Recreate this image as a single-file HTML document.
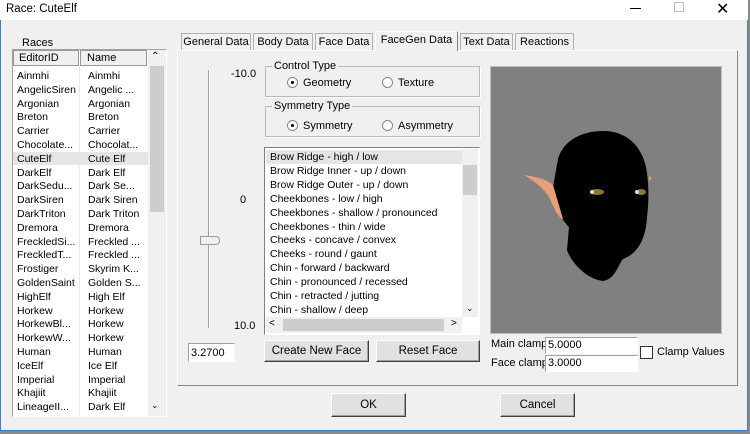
<!DOCTYPE html><html><head><style>
*{box-sizing:border-box;margin:0;padding:0}
body{width:750px;height:434px;background:#8a8a8a;font-family:"Liberation Sans",sans-serif;font-size:11px;color:#000;position:relative;overflow:hidden}
.a{position:absolute}
.win{left:0;top:0;width:748px;height:431px;background:#f0f0f0;border:1px solid #3c7fd0;border-top:none}
.sunk{border:1px solid;border-color:#a0a0a0 #fff #fff #a0a0a0;background:#fff}
.btn{background:#e1e1e1;border:1px solid;border-color:#fff #404040 #404040 #fff;box-shadow:inset -1px -1px 0 #a0a0a0;text-align:center;font-size:11.5px}
.grp{border:1px solid #b9b9b9;box-shadow:1px 1px 0 #fff}
.row{position:absolute;left:0;height:14px;line-height:14px;font-size:10.5px;white-space:nowrap}
.tab{position:absolute;top:33px;height:17px;line-height:16px;border:1px solid #b0b0b0;border-bottom:none;font-size:11px;background:#f0f0f0;text-align:center;white-space:nowrap}
.radio{display:inline-block;width:11px;height:11px;border-radius:50%;border:1px solid #888;background:#fff;vertical-align:-2px;margin-right:5px;position:relative}
.radio.on:after{content:"";position:absolute;left:3px;top:3px;width:3px;height:3px;border-radius:50%;background:#000}
</style></head><body>
<div class="a win"></div>
<div class="a" style="left:0;top:0;width:748px;height:20px;background:#fff"></div>
<div class="a" style="left:6px;top:3px;font-size:11.5px">Race: CuteElf</div>
<div class="a" style="left:630px;top:8px;width:11px;height:1px;background:#000"></div>
<div class="a" style="left:674px;top:2px;width:10px;height:10px;border:1px solid #bbb"></div>
<div class="a" style="left:716px;top:-1px;font-size:16px">✕</div>

<div class="a" style="left:22px;top:37px;font-size:11px">Races</div>
<div class="a sunk" style="left:12px;top:49px;width:155px;height:368px"></div>
<div class="a" style="left:13px;top:50px;width:66px;height:16px;background:#f0f0f0;border:1px solid #999;padding-left:5px;font-size:11px;line-height:14px">EditorID</div>
<div class="a" style="left:80px;top:50px;width:67px;height:16px;background:#f0f0f0;border:1px solid #999;padding-left:6px;font-size:11px;line-height:14px">Name</div>
<div class="a" style="left:148px;top:50px;width:18px;height:366px;background:#f0f0f0"></div>
<div class="a" style="left:150px;top:66px;width:14px;height:146px;background:#cdcdcd"></div>
<div class="a" style="left:151px;top:51px;font-size:10px">⌃</div>
<div class="a" style="left:151px;top:400px;font-size:9px">⌄</div>
<div class="a" style="left:13px;top:152px;width:135px;height:13px;background:#e5e5e5"></div>
<div class="a" style="left:79px;top:67px;width:1px;height:349px;background:#e8e8e8"></div>
<div class="a" id="rl" style="left:17px;top:69px;width:140px"></div>

<div class="tab" style="left:181px;width:70px">General Data</div>
<div class="tab" style="left:253px;width:60px">Body Data</div>
<div class="tab" style="left:315px;width:58px">Face Data</div>
<div class="tab" style="left:375px;width:83px;top:31px;height:20px;z-index:2;border-color:#fff #808080 #f0f0f0 #fff">FaceGen Data</div>
<div class="tab" style="left:460px;width:53px">Text Data</div>
<div class="tab" style="left:515px;width:59px">Reactions</div>
<div class="a" style="left:177px;top:50px;width:561px;height:336px;border:1px solid;border-color:#fff #888 #888 #fff"></div>

<div class="a" style="left:208px;top:70px;width:2px;height:258px;border-left:1px solid #a0a0a0;border-right:1px solid #fff"></div>
<div class="a" style="left:200px;top:236px;width:20px;height:9px;background:#f0f0f0;border:1px solid #999;border-radius:0 4px 4px 0"></div>
<div class="a" style="left:231px;top:68px">-10.0</div>
<div class="a" style="left:240px;top:194px">0</div>
<div class="a" style="left:234px;top:320px">10.0</div>
<div class="a sunk" style="left:188px;top:343px;width:47px;height:19px;padding:3px 2px;font-size:11px">3.2700</div>

<div class="a grp" style="left:265px;top:66px;width:215px;height:31px"></div>
<div class="a" style="left:272px;top:60px;background:#f0f0f0;padding:0 2px">Control Type</div>
<div class="a" style="left:287px;top:77px"><span class="radio on"></span>Geometry</div>
<div class="a" style="left:382px;top:77px"><span class="radio"></span>Texture</div>
<div class="a grp" style="left:265px;top:106px;width:215px;height:31px"></div>
<div class="a" style="left:272px;top:100px;background:#f0f0f0;padding:0 2px">Symmetry Type</div>
<div class="a" style="left:287px;top:120px"><span class="radio on"></span>Symmetry</div>
<div class="a" style="left:382px;top:120px"><span class="radio"></span>Asymmetry</div>

<div class="a sunk" style="left:264px;top:147px;width:216px;height:188px;border-color:#808080 #fff #fff #808080"></div>
<div class="a" style="left:266px;top:150px;width:196px;height:14px;background:#e5e5e5"></div>
<div class="a" style="left:462px;top:149px;width:16px;height:168px;background:#f0f0f0"></div>
<div class="a" style="left:463px;top:165px;width:14px;height:30px;background:#cdcdcd"></div>
<div class="a" style="left:266px;top:317px;width:196px;height:16px;background:#f0f0f0"></div>
<div class="a" style="left:283px;top:319px;width:161px;height:12px;background:#cdcdcd"></div>
<div class="a" style="left:269px;top:318px;font-size:10px">&lt;</div>
<div class="a" style="left:451px;top:318px;font-size:10px">&gt;</div>
<div class="a" style="left:466px;top:303px;font-size:9px">⌄</div>
<div class="a" id="fl" style="left:270px;top:150px;width:190px"></div>

<div class="a btn" style="left:264px;top:340px;width:105px;height:22px;line-height:20px">Create New Face</div>
<div class="a btn" style="left:376px;top:340px;width:104px;height:22px;line-height:20px">Reset Face</div>

<div class="a" style="left:490px;top:66px;width:232px;height:268px;background:#808080;border:1px solid #c0c0c0">
<svg width="230" height="266" style="position:absolute;left:0;top:0">
<path d="M112 64 C90 64 72 74 67 92 L62 120 C64 140 70 152 78 160 L76 183 C80 195 95 212 112 214 C124 212 126 200 132 192 C148 186 155 170 156 150 C158 135 158 115 155 100 C150 78 135 64 112 64Z" fill="#000"/>
<path d="M33 108 C48 110 58 114 62 118 L72 152 C66 150 63 140 58 130 C50 118 42 114 33 108Z" fill="#e6a07a"/>
<path d="M158 109 l3 2 l-3 3z" fill="#e6a07a"/>
<ellipse cx="106" cy="125" rx="7" ry="3" fill="#8a7a30"/><ellipse cx="101" cy="125" rx="2" ry="2" fill="#ddd"/>
<ellipse cx="150" cy="125" rx="5" ry="3" fill="#8a7a30"/><ellipse cx="146" cy="125" rx="2" ry="2" fill="#ddd"/>
</svg></div>
<div class="a" style="left:491px;top:338px">Main clamp</div>
<div class="a sunk" style="left:545px;top:337px;width:93px;height:17px;padding:1px 2px;font-size:11px">5.0000</div>
<div class="a" style="left:491px;top:357px">Face clamp</div>
<div class="a sunk" style="left:545px;top:355px;width:93px;height:17px;padding:1px 2px;font-size:11px">3.0000</div>
<div class="a" style="left:640px;top:346px;width:13px;height:13px;border:1px solid #333;background:#fff"></div>
<div class="a" style="left:657px;top:346px">Clamp Values</div>

<div class="a btn" style="left:331px;top:393px;width:75px;height:24px;line-height:22px">OK</div>
<div class="a btn" style="left:500px;top:393px;width:75px;height:24px;line-height:22px">Cancel</div>

<script>
var r=[["Ainmhi","Ainmhi"],["AngelicSiren","Angelic ..."],["Argonian","Argonian"],["Breton","Breton"],["Carrier","Carrier"],["Chocolate...","Chocolat..."],["CuteElf","Cute Elf"],["DarkElf","Dark Elf"],["DarkSedu...","Dark Se..."],["DarkSiren","Dark Siren"],["DarkTriton","Dark Triton"],["Dremora","Dremora"],["FreckledSi...","Freckled ..."],["FreckledT...","Freckled ..."],["Frostiger","Skyrim K..."],["GoldenSaint","Golden S..."],["HighElf","High Elf"],["Horkew","Horkew"],["HorkewBl...","Horkew"],["HorkewW...","Horkew"],["Human","Human"],["IceElf","Ice Elf"],["Imperial","Imperial"],["Khajiit","Khajiit"],["LineageII...","Dark Elf"]];
var h="";r.forEach(function(x,i){h+='<div class="row" style="top:'+(i*13.8)+'px">'+x[0]+'</div><div class="row" style="left:71px;top:'+(i*13.8)+'px">'+x[1]+'</div>';});
document.getElementById("rl").innerHTML=h;
var f=["Brow Ridge - high / low","Brow Ridge Inner - up / down","Brow Ridge Outer - up / down","Cheekbones - low / high","Cheekbones - shallow / pronounced","Cheekbones - thin / wide","Cheeks - concave / convex","Cheeks - round / gaunt","Chin - forward / backward","Chin - pronounced / recessed","Chin - retracted / jutting","Chin - shallow / deep"];
h="";f.forEach(function(x,i){h+='<div class="row" style="top:'+(i*13.9)+'px">'+x+'</div>';});
document.getElementById("fl").innerHTML=h;
</script>
</body></html>
